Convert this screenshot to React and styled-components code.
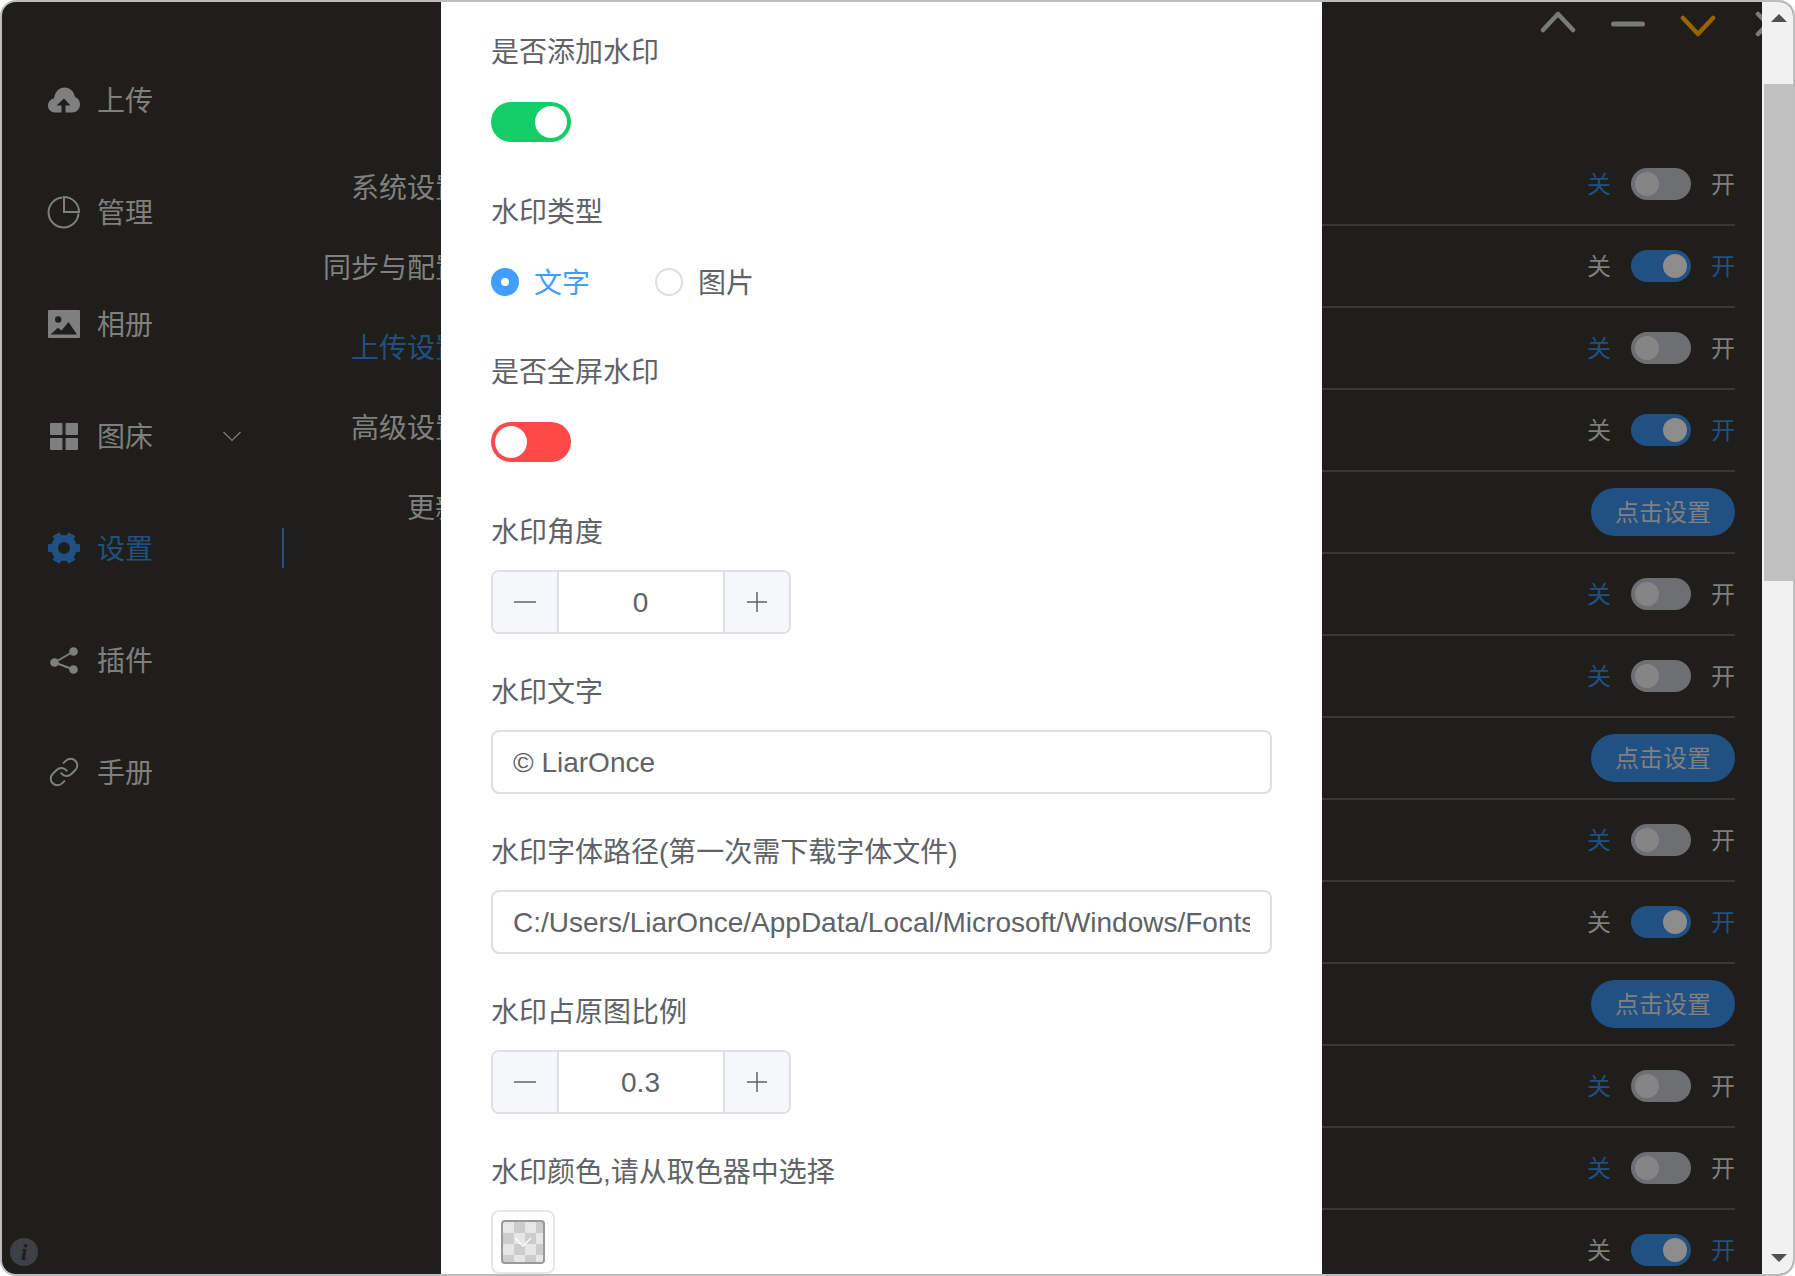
import React from 'react';
import styled, { createGlobalStyle } from 'styled-components';
import { Link } from 'lucide-react';

const FONT = '"Liberation Sans", "Noto Sans CJK SC", sans-serif';
const DIM = '#7f7f7f';
const ACTIVE = '#215082';

const navItems = [
  { key: 'upload', label: '上传', icon: <CloudIcon /> },
  { key: 'manage', label: '管理', icon: <PieIcon /> },
  { key: 'album', label: '相册', icon: <PictureIcon /> },
  { key: 'bed', label: '图床', icon: <GridIcon />, arrow: true },
  { key: 'settings', label: '设置', icon: <GearIcon />, active: true },
  { key: 'plugin', label: '插件', icon: <ShareIcon /> },
  { key: 'manual', label: '手册', icon: <Link size={32} strokeWidth={1.5} /> },
];

const subItems = [
  { label: '系统设置' },
  { label: '同步与配置' },
  { label: '上传设置', active: true },
  { label: '高级设置' },
  { label: '更新' },
];

// true/false = switch state, 'btn' = "点击设置" button
const rows = [false, true, false, true, 'btn', false, false, 'btn', false, true, 'btn', false, false, true];

export default function App() {
  return (
    <Frame>
      <GlobalStyle />
      <AppWindow>
        <Sidebar>
          {navItems.map((item) => (
            <NavItem key={item.key} $active={item.active}>
              <NavIcon>{item.icon}</NavIcon>
              <NavText>{item.label}</NavText>
              {item.arrow && (
                <NavArrow width="20" height="12" viewBox="0 0 20 12">
                  <path d="M1.500 2 10 10.500 18.500 2" fill="none" stroke={DIM} strokeWidth="1.200" />
                </NavArrow>
              )}
            </NavItem>
          ))}
          <InfoBadge>i</InfoBadge>
        </Sidebar>

        <SubMenu>
          {subItems.map((item) => (
            <SubItem key={item.label} $active={item.active}>{item.label}</SubItem>
          ))}
        </SubMenu>

        <Content>
          <TopBar>
            <ControlIcon viewBox="0 0 36 36" $color="#7a7a7a">
              <path d="M3 24 18 8l15 16" />
            </ControlIcon>
            <ControlIcon viewBox="0 0 36 36" $color="#7a7a7a" $width={5}>
              <path d="M3.500 18h29" />
            </ControlIcon>
            <ControlIcon viewBox="0 0 36 36" $color="#9b6200">
              <path d="M3 12 18 28l15-16" />
            </ControlIcon>
            <ControlIcon viewBox="0 0 36 36" $color="#7a7a7a">
              <path d="M8 8l20 20M28 8 8 28" />
            </ControlIcon>
          </TopBar>
          <SettingList>
            {rows.map((row, i) => (
              <SettingRow key={i}>
                {row === 'btn' ? (
                  <SetButton>点击设置</SetButton>
                ) : (
                  <>
                    <StateText $on={!row}>关</StateText>
                    <DimSwitch $checked={row} />
                    <StateText $on={row}>开</StateText>
                  </>
                )}
              </SettingRow>
            ))}
          </SettingList>
        </Content>

        <Scrollbar>
          <StepButton $height={82}><ArrowUp /></StepButton>
          <Thumb />
          <Track />
          <StepButton $height={26}><ArrowDown /></StepButton>
        </Scrollbar>

        <Dialog>
          <Field>
            <FieldLabel>是否添加水印</FieldLabel>
            <Control><Toggle $checked /></Control>
          </Field>
          <Field>
            <FieldLabel>水印类型</FieldLabel>
            <Control>
              <RadioGroup>
                <Radio $checked /><RadioText $checked>文字</RadioText>
              </RadioGroup>
              <RadioGroup>
                <Radio /><RadioText>图片</RadioText>
              </RadioGroup>
            </Control>
          </Field>
          <Field>
            <FieldLabel>是否全屏水印</FieldLabel>
            <Control><Toggle /></Control>
          </Field>
          <Field>
            <FieldLabel>水印角度</FieldLabel>
            <Control><NumberInput value="0" /></Control>
          </Field>
          <Field>
            <FieldLabel>水印文字</FieldLabel>
            <Control><TextInput readOnly value="© LiarOnce" /></Control>
          </Field>
          <Field>
            <FieldLabel>水印字体路径(第一次需下载字体文件)</FieldLabel>
            <Control>
              <TextInput readOnly value="C:/Users/LiarOnce/AppData/Local/Microsoft/Windows/Fonts/msyh.ttc" />
            </Control>
          </Field>
          <Field>
            <FieldLabel>水印占原图比例</FieldLabel>
            <Control><NumberInput value="0.3" /></Control>
          </Field>
          <Field>
            <FieldLabel>水印颜色,请从取色器中选择</FieldLabel>
            <Control>
              <ColorTrigger>
                <ColorSwatch>
                  <svg width="18" height="10" viewBox="0 0 18 10">
                    <path d="M1 1l8 8 8-8" fill="none" stroke="#fff" strokeWidth="1.300" />
                  </svg>
                </ColorSwatch>
              </ColorTrigger>
            </Control>
          </Field>
        </Dialog>
      </AppWindow>
    </Frame>
  );
}

function NumberInput({ value }) {
  return (
    <Stepper>
      <StepperButton $side="left">
        <svg width="22" height="22" viewBox="0 0 22 22"><path d="M0 11h22" stroke="#606266" strokeWidth="1.500" /></svg>
      </StepperButton>
      <StepperValue readOnly value={value} />
      <StepperButton $side="right">
        <svg width="22" height="22" viewBox="0 0 22 22"><path d="M1 11h20M11 1v20" stroke="#606266" strokeWidth="1.500" /></svg>
      </StepperButton>
    </Stepper>
  );
}

function CloudIcon() {
  return (
    <svg width="32" height="26" viewBox="0 0 32 26">
      <path
        fill="currentColor"
        d="M7 25.500C3 25.500 0 22.500 0 18.500c0-3.600 2.600-6.600 6-7.100C7 4.800 11 .5 16.500 .5 22 .5 26 4.500 27 10c3 1 5 4 5 7.500 0 4.500-3.500 8-8 8h-6.500v-7h5L16 11.500l-7.500 7h5v7z"
      />
    </svg>
  );
}

function PieIcon() {
  return (
    <svg width="33" height="33" viewBox="0 0 33 33" fill="none" stroke="currentColor" strokeWidth="2">
      <path d="M15.500 1.500a15 15 0 1 0 16 16" />
      <path d="M17 1a15 15 0 0 1 15 15H17z" />
    </svg>
  );
}

function PictureIcon() {
  return (
    <svg width="32" height="28" viewBox="0 0 32 28">
      <path
        fill="currentColor"
        fillRule="evenodd"
        d="M0 1a1 1 0 0 1 1-1h30a1 1 0 0 1 1 1v26a1 1 0 0 1-1 1H1a1 1 0 0 1-1-1zM7 9.500a3.200 3.200 0 1 0 6.400 0 3.200 3.200 0 0 0-6.400 0zM2.500 24.500h26.500L20.500 12l-7 8.500-3.500-2.800z"
      />
    </svg>
  );
}

function GridIcon() {
  return (
    <svg width="28" height="27" viewBox="0 0 28 27" fill="currentColor">
      <rect x="0" y="0" width="12.500" height="12" rx="1" />
      <rect x="15.500" y="0" width="12.500" height="12" rx="1" />
      <rect x="0" y="15" width="12.500" height="12" rx="1" />
      <rect x="15.500" y="15" width="12.500" height="12" rx="1" />
    </svg>
  );
}

function GearIcon() {
  return (
    <svg width="32" height="32" viewBox="0 0 32 32" fill="currentColor">
      {[30, 90, 150, 210, 270, 330].map((deg) => (
        <rect key={deg} x="12" y="0" width="8" height="8" rx="1" transform={`rotate(${deg} 16 16)`} />
      ))}
      <circle cx="16" cy="16" r="9.500" fill="none" stroke="currentColor" strokeWidth="7" />
    </svg>
  );
}

function ShareIcon() {
  return (
    <svg width="28" height="27" viewBox="0 0 28 27" fill="currentColor">
      <path d="M4.500 15.500 23.500 4.500M4.500 15.500l19 7" stroke="currentColor" strokeWidth="2" />
      <circle cx="4.500" cy="15.500" r="4.300" />
      <circle cx="23.500" cy="4.500" r="4.300" />
      <circle cx="23.500" cy="22.500" r="4.300" />
    </svg>
  );
}

const GlobalStyle = createGlobalStyle`
  html, body {
    margin: 0;
    padding: 0;
    background: #fff;
    overflow: hidden;
  }
`;

const Frame = styled.div`
  width: 1795px;
  height: 1276px;
  font-family: ${FONT};
`;

const AppWindow = styled.div`
  position: relative;
  box-sizing: border-box;
  width: 100%;
  height: 100%;
  display: flex;
  overflow: hidden;
  background: #1f1e1b;
  border: 2px solid #bdbdbd;
  border-radius: 16px;
`;

const Sidebar = styled.nav`
  position: relative;
  flex: none;
  box-sizing: border-box;
  width: 282px;
  padding-top: 42px;
`;

const NavItem = styled.div`
  position: relative;
  display: flex;
  align-items: center;
  height: 112px;
  padding-left: 45px;
  font-size: 28px;
  color: ${(p) => (p.$active ? ACTIVE : DIM)};

  &::after {
    content: '';
    display: ${(p) => (p.$active ? 'block' : 'none')};
    position: absolute;
    right: 0;
    top: 36px;
    width: 2px;
    height: 40px;
    background: ${ACTIVE};
  }
`;

const NavIcon = styled.span`
  display: flex;
  align-items: center;
  justify-content: center;
  width: 33px;
  margin-right: 17px;
`;

const NavText = styled.span`
  padding-bottom: 2px;
`;

const NavArrow = styled.svg`
  margin-left: 69px;
`;

const InfoBadge = styled.span`
  position: absolute;
  left: 8px;
  bottom: 8px;
  width: 28px;
  height: 28px;
  border-radius: 50%;
  background: #3d4046;
  color: #1f1e1b;
  font: italic bold 24px/28px "Liberation Serif", serif;
  text-align: center;
`;

const SubMenu = styled.div`
  flex: none;
  box-sizing: border-box;
  width: 180px;
  padding-top: 144px;
`;

const SubItem = styled.div`
  height: 80px;
  line-height: 86px;
  padding-right: 1px;
  text-align: right;
  font-size: 28px;
  white-space: nowrap;
  color: ${(p) => (p.$active ? ACTIVE : '#808080')};
`;

const Content = styled.main`
  flex: 1;
  min-width: 0;
  overflow: hidden;
`;

const TopBar = styled.div`
  box-sizing: border-box;
  height: 142px;
  display: flex;
  justify-content: flex-end;
  align-items: flex-start;
  gap: 34px;
  padding-top: 4px;
  margin-right: -24px;
`;

const ControlIcon = styled.svg`
  flex: none;
  width: 36px;
  height: 36px;
  fill: none;
  stroke: ${(p) => p.$color};
  stroke-width: ${(p) => p.$width || 4.5}px;
  stroke-linecap: round;
  stroke-linejoin: round;
`;

const SettingList = styled.div`
  margin-right: 27px;
`;

const SettingRow = styled.div`
  box-sizing: border-box;
  height: 82px;
  display: flex;
  align-items: center;
  justify-content: flex-end;
  border-bottom: 2px solid #3a3836;
  font-size: 24px;
`;

const StateText = styled.span`
  padding-bottom: 3px;
  color: ${(p) => (p.$on ? ACTIVE : DIM)};
`;

const DimSwitch = styled.span`
  position: relative;
  box-sizing: border-box;
  width: 60px;
  height: 32px;
  margin: 0 20px;
  border-radius: 16px;
  background: ${(p) => (p.$checked ? ACTIVE : '#6e6f72')};

  &::after {
    content: '';
    position: absolute;
    top: 4px;
    left: ${(p) => (p.$checked ? '32px' : '4px')};
    width: 24px;
    height: 24px;
    border-radius: 50%;
    background: ${(p) => (p.$checked ? '#8c8c8c' : '#858585')};
  }
`;

const SetButton = styled.span`
  width: 144px;
  height: 48px;
  line-height: 50px;
  border-radius: 24px;
  background: ${ACTIVE};
  color: #808080;
  text-align: center;
`;

const Scrollbar = styled.div`
  flex: none;
  width: 31px;
  display: flex;
  flex-direction: column;
  background: #f1f1f1;
`;

const StepButton = styled.div`
  flex: none;
  height: ${(p) => p.$height}px;
  padding-left: 9px;
`;

const ArrowUp = styled.div`
  width: 0;
  margin-top: 12px;
  border-left: 8px solid transparent;
  border-right: 8px solid transparent;
  border-bottom: 8px solid #505050;
`;

const ArrowDown = styled.div`
  width: 0;
  margin-top: 6px;
  border-left: 8px solid transparent;
  border-right: 8px solid transparent;
  border-top: 8px solid #505050;
`;

const Thumb = styled.div`
  flex: none;
  height: 497px;
  margin-left: 2px;
  background: #c1c1c1;
`;

const Track = styled.div`
  flex: 1;
`;

const Dialog = styled.section`
  position: absolute;
  top: 0;
  bottom: 0;
  left: 439px;
  width: 881px;
  box-sizing: border-box;
  padding: 18px 50px 0;
  overflow: hidden;
  background: #fff;
  color: #606266;
`;

const Field = styled.div`
  height: 134px;
  margin-bottom: 26px;
`;

const FieldLabel = styled.label`
  display: block;
  height: 64px;
  line-height: 66px;
  margin-bottom: 6px;
  font-size: 28px;
`;

const Control = styled.div`
  display: flex;
  align-items: center;
  height: 64px;
`;

const Toggle = styled.span`
  position: relative;
  width: 80px;
  height: 40px;
  border-radius: 20px;
  background: ${(p) => (p.$checked ? '#13ce66' : '#ff4949')};

  &::after {
    content: '';
    position: absolute;
    top: 4px;
    left: ${(p) => (p.$checked ? '44px' : '4px')};
    width: 32px;
    height: 32px;
    border-radius: 50%;
    background: #fff;
  }
`;

const RadioGroup = styled.span`
  display: flex;
  align-items: center;
  margin-right: 65px;
`;

const Radio = styled.span`
  box-sizing: border-box;
  width: 28px;
  height: 28px;
  margin-right: 15px;
  border-radius: 50%;
  border: ${(p) => (p.$checked ? '10px solid #409eff' : '2px solid #dcdfe6')};
  background: #fff;
`;

const RadioText = styled.span`
  padding-bottom: 2px;
  font-size: 28px;
  color: ${(p) => (p.$checked ? '#409eff' : '#606266')};
`;

const Stepper = styled.div`
  box-sizing: border-box;
  display: flex;
  width: 300px;
  height: 64px;
  border: 2px solid #dcdfe6;
  border-radius: 8px;
  overflow: hidden;
`;

const StepperButton = styled.span`
  flex: none;
  box-sizing: border-box;
  width: 66px;
  display: flex;
  align-items: center;
  justify-content: center;
  background: #f5f7fa;
  border-${(p) => (p.$side === 'left' ? 'right' : 'left')}: 2px solid #dcdfe6;
`;

const StepperValue = styled.input`
  flex: 1;
  min-width: 0;
  padding: 2px 1px 0 0;
  border: 0;
  outline: 0;
  text-align: center;
  font: 28px ${FONT};
  color: #606266;
`;

const TextInput = styled.input`
  box-sizing: border-box;
  width: 781px;
  height: 64px;
  padding: 2px 20px 0;
  border: 2px solid #dcdfe6;
  border-radius: 8px;
  outline: 0;
  font: 28px ${FONT};
  color: #606266;
`;

const ColorTrigger = styled.div`
  box-sizing: border-box;
  width: 64px;
  height: 64px;
  padding: 8px;
  border: 2px solid #e6e6e6;
  border-radius: 8px;
`;

const ColorSwatch = styled.div`
  box-sizing: border-box;
  height: 44px;
  display: flex;
  align-items: center;
  justify-content: center;
  border: 2px solid #999;
  border-radius: 4px;
  background: repeating-conic-gradient(#ccc 0 25%, #e6e6e6 0 50%) 0 0 / 22px 22px;
`;
